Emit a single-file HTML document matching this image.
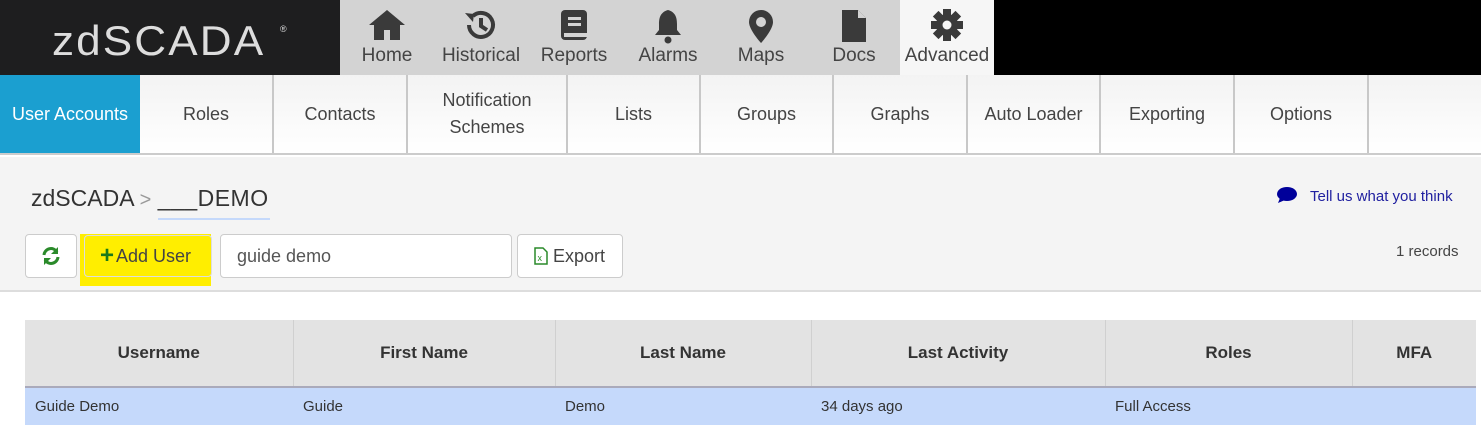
<!DOCTYPE html>
<html><head><style>
*{margin:0;padding:0;box-sizing:border-box}
body{width:1481px;height:425px;overflow:hidden;font-family:"Liberation Sans",sans-serif;background:#fff;position:relative}
.abs{position:absolute}
.top{left:0;top:0;width:1481px;height:75px;background:#000}
.logo{left:0;top:0;width:340px;height:75px;background:#1e1e1f}
.logo .t{position:absolute;left:52px;top:18px;color:#ddd;font-size:42px;line-height:46px;letter-spacing:2px;transform:scaleX(1.05);transform-origin:left}
.nav{left:340px;top:0;width:560px;height:75px;background:#d3d3d3}
.ni{position:absolute;top:0;height:75px;text-align:center;color:#444;font-size:19px}
.ni svg{display:block;margin:8px auto 0;}
.ni span{position:absolute;left:0;right:0;top:45px}
.sub{left:0;top:75px;width:1481px;height:80px;background:linear-gradient(#f3f3f3,#fff);border-bottom:2px solid #ccc}
.tab{position:absolute;top:0;height:78px;border-right:2px solid #c8c8c8;display:flex;align-items:center;justify-content:center;text-align:center;font-size:18px;color:#444;line-height:27px}
.content{left:0;top:157px;width:1481px;height:135px;background:#f4f4f4;border-bottom:2px solid #ddd}
.btn{position:absolute;background:#fff;border:1px solid #ccc;border-radius:4px;height:44px;top:234px;display:flex;align-items:center;font-size:18px;color:#444}
table{position:absolute;left:25px;top:320px;width:1451px;border-collapse:collapse}
th{background:#e3e3e3;height:67px;font-size:17px;color:#333;border-right:1px solid #d0d0d0;border-bottom:2px solid #aab}
td{background:#c5d9fb;height:38px;font-size:15px;color:#333;padding-left:10px}
</style></head><body>
<div class="abs top"></div>
<div class="abs logo"><div class="t">zdSCADA</div><div style="position:absolute;left:280px;top:24px;color:#ddd;font-size:9px">®</div></div>
<div class="abs nav">
 <div class="ni" style="left:14px;width:66px"><svg width="40" height="34" viewBox="0 0 40 34"><path d="M20 2L2 17h5v15h10v-10h6v10h10V17h5z" fill="#3a3a3a"/></svg><span>Home</span></div>
 <div class="ni" style="left:95px;width:92px"><svg width="34" height="34" viewBox="0 0 34 34"><path d="M5 17a12 12 0 1 0 4-9" fill="none" stroke="#3a3a3a" stroke-width="4"/><path d="M1 5l9 1-1 8z" fill="#3a3a3a"/><path d="M17 10v8l6 4" fill="none" stroke="#3a3a3a" stroke-width="4"/></svg><span>Historical</span></div>
 <div class="ni" style="left:196px;width:76px"><svg width="30" height="34" viewBox="0 0 30 34"><rect x="2" y="2" width="26" height="30" rx="4" fill="#3a3a3a"/><rect x="9" y="9" width="13" height="3" fill="#d3d3d3"/><rect x="9" y="15" width="13" height="3" fill="#d3d3d3"/><rect x="5" y="25" width="23" height="4" fill="#d3d3d3"/></svg><span>Reports</span></div>
 <div class="ni" style="left:290px;width:76px"><svg width="32" height="36" viewBox="0 0 32 36"><path d="M16 2c-7 2-9 7-9 14v6l-4 5h26l-4-5v-6c0-7-2-12-9-14z" fill="#3a3a3a"/><circle cx="16" cy="32" r="3.5" fill="#3a3a3a"/></svg><span>Alarms</span></div>
 <div class="ni" style="left:386px;width:70px"><svg width="28" height="36" viewBox="0 0 28 36"><path d="M14 2a12 12 0 0 0-12 12c0 8 12 21 12 21s12-13 12-21A12 12 0 0 0 14 2z" fill="#3a3a3a"/><circle cx="14" cy="14" r="5" fill="#d3d3d3"/></svg><span>Maps</span></div>
 <div class="ni" style="left:480px;width:68px"><svg width="28" height="36" viewBox="0 0 28 36"><path d="M2 2h16l8 8v24H2z" fill="#3a3a3a"/><path d="M18 2v8h8" fill="#d3d3d3"/></svg><span>Docs</span></div>
</div>
<div class="abs" style="left:900px;top:0;width:94px;height:75px;background:#f6f6f6;text-align:center;color:#444;font-size:19px">
 <svg width="34" height="34" viewBox="0 0 34 34" style="display:block;margin:8px auto 0"><g fill="#3a3a3a" transform="translate(17 17)"><circle r="11"/><rect x="-4" y="-16" width="8" height="32"/><rect x="-4" y="-16" width="8" height="32" transform="rotate(45)"/><rect x="-4" y="-16" width="8" height="32" transform="rotate(90)"/><rect x="-4" y="-16" width="8" height="32" transform="rotate(135)"/></g><circle cx="17" cy="17" r="4.5" fill="#f6f6f6"/></svg>
 <div style="position:absolute;left:0;right:0;top:45px">Advanced</div></div>
<div class="abs sub">
 <div class="tab" style="left:0;width:140px;background:#1b9fd0;color:#fff;border-right:none">User Accounts</div>
 <div class="tab" style="left:140px;width:134px">Roles</div>
 <div class="tab" style="left:274px;width:134px">Contacts</div>
 <div class="tab" style="left:408px;width:160px">Notification<br>Schemes</div>
 <div class="tab" style="left:568px;width:133px">Lists</div>
 <div class="tab" style="left:701px;width:133px">Groups</div>
 <div class="tab" style="left:834px;width:134px">Graphs</div>
 <div class="tab" style="left:968px;width:133px">Auto Loader</div>
 <div class="tab" style="left:1101px;width:134px">Exporting</div>
 <div class="tab" style="left:1235px;width:134px">Options</div>
</div>
<div class="abs content"></div>
<div class="abs" style="left:31px;top:185px;font-size:23px;color:#333">zdSCADA <span style="color:#999;font-size:20px">&gt;</span> <span style="border-bottom:2px solid #c5d9fb;padding-bottom:6px;display:inline-block;width:112px;letter-spacing:0.5px">___DEMO</span></div>
<div class="abs" style="left:1276px;top:186px;font-size:15px;color:#2020a0"><svg width="22" height="18" viewBox="0 0 22 18" style="vertical-align:-3px;margin-right:12px"><ellipse cx="11" cy="8" rx="10" ry="7" fill="#00009a"/><path d="M4 12l-2 5 7-3z" fill="#00009a"/></svg>Tell us what you think</div>
<div class="abs" style="left:1396px;top:243px;font-size:15px;color:#444">1 records</div>
<div class="btn" style="left:25px;width:52px;justify-content:center"><svg width="20" height="20" viewBox="0 0 20 20"><path d="M3 9a7 7 0 0 1 13-3M17 11a7 7 0 0 1-13 3" fill="none" stroke="#2a8a2a" stroke-width="3"/><path d="M17 1v7h-7zM3 19v-7h7z" fill="#2a8a2a"/></svg></div>
<div class="abs" style="left:80px;top:234px;width:131px;height:52px;background:#ffee00"></div>
<div class="btn" style="left:84px;width:128px;top:235px;height:42px;background:transparent;border-color:#ddd;padding-left:15px"><span style="color:#1a7a1a;font-size:24px;font-weight:bold;margin-right:2px">+</span>Add User</div>
<div class="btn" style="left:220px;width:292px;padding-left:16px;color:#555">guide demo</div>
<div class="btn" style="left:517px;width:106px;padding-left:16px"><svg width="14" height="18" viewBox="0 0 14 18" style="margin-right:5px"><path d="M1 1h8l4 4v12H1z" fill="#fff" stroke="#2a8a2a" stroke-width="1.5"/><text x="3.5" y="14" font-size="9" fill="#2a8a2a" font-family="Liberation Sans">x</text></svg>Export</div>
<table>
<tr><th style="width:268px">Username</th><th style="width:262px">First Name</th><th style="width:256px">Last Name</th><th style="width:294px">Last Activity</th><th style="width:247px">Roles</th><th style="border-right:none">MFA</th></tr>
<tr><td>Guide Demo</td><td>Guide</td><td>Demo</td><td>34 days ago</td><td>Full Access</td><td></td></tr>
</table>
</body></html>
